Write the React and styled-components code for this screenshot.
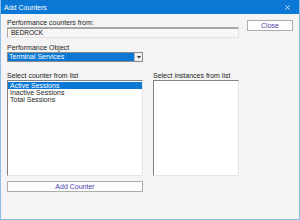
import React from "react";
import styled, { createGlobalStyle } from "styled-components";

const Global = createGlobalStyle`
  html, body { margin: 0; padding: 0; background: #f4f4f4; }
  body { font-family: "Liberation Sans", Arial, sans-serif; }
`;

const Window = styled.div`
  width: 300px;
  height: 220px;
  box-sizing: border-box;
  border: 1px solid #8cbde6;
  border-top: none;
  background: #f4f4f4;
  display: flex;
  flex-direction: column;
  overflow: hidden;
`;

const TitleBar = styled.div`
  height: 14px;
  margin: 0 -1px;
  background: #0a78d4;
  color: #fff;
  font-size: 7px;
  display: flex;
  align-items: center;
  justify-content: space-between;
  padding: 0 10px 0 4px;
`;

const CloseX = styled.svg`
  width: 5px;
  height: 5px;
`;

const Content = styled.div`
  padding: 4px 6px 0 6px;
  display: flex;
  flex-direction: column;
`;

const TopRow = styled.div`
  display: flex;
  align-items: flex-start;
`;

const Field = styled.div`
  display: flex;
  flex-direction: column;
  width: ${(p) => p.$w}px;
`;

const Label = styled.div`
  font-size: 7px;
  line-height: 9px;
  height: 9px;
  color: #1e1e1e;
  white-space: nowrap;
  margin-top: ${(p) => p.$mt || 0}px;
`;

const TextBox = styled.div`
  height: 11px;
  box-sizing: border-box;
  border-top: 2px solid #a8a8a8;
  border-left: 1px solid #a8a8a8;
  border-right: 1px solid #e2e2e2;
  border-bottom: 1px solid #e2e2e2;
  background: #f7f7f7;
  font-size: 6.5px;
  line-height: 8px;
  padding-left: 3px;
  color: #111;
`;

const Button = styled.button`
  box-sizing: border-box;
  width: ${(p) => p.$w}px;
  height: 11px;
  margin: ${(p) => p.$m || 0};
  padding: 0;
  background: #fdfdfd;
  border: 1px solid #adadad;
  font-family: "Liberation Sans", Arial, sans-serif;
  font-size: 7px;
  line-height: 9px;
  color: #4e45ad;
`;

const Select = styled.div`
  width: 136px;
  height: 10px;
  box-sizing: border-box;
  border: 1px solid #8a8a8a;
  display: flex;
  background: #fff;
`;

const SelectValue = styled.div`
  flex: 1;
  background: #0a78d4;
  color: #fff;
  font-size: 7px;
  line-height: 8px;
  padding-left: 1px;
`;

const DropButton = styled.div`
  width: 7px;
  border-left: 1px solid #b8b8b8;
  background: #f0f0f0;
  display: flex;
  align-items: center;
  justify-content: center;
`;

const Columns = styled.div`
  display: grid;
  grid-template-columns: 136px 86px;
  column-gap: 10px;
  margin-top: 9px;
`;

const ListBox = styled.div`
  height: 96px;
  box-sizing: border-box;
  border-top: 1px solid #828282;
  border-left: 1px solid #828282;
  border-right: 1px solid #e6e6e6;
  border-bottom: 1px solid #e6e6e6;
  background: #fff;
  padding-top: 1px;
`;

const Item = styled.div`
  font-size: 7px;
  line-height: 7px;
  height: 7px;
  padding-left: 2px;
  color: ${(p) => (p.$sel ? "#fff" : "#1e1e1e")};
  background: ${(p) => (p.$sel ? "#0a78d4" : "transparent")};
`;

export default function App() {
  return (
    <>
      <Global />
      <Window>
        <TitleBar>
          <span>Add Counters</span>
          <CloseX viewBox="0 0 10 10">
            <path d="M1 1L9 9M9 1L1 9" stroke="#fff" strokeWidth="1.6" />
          </CloseX>
        </TitleBar>
        <Content>
          <TopRow>
            <Field $w={232}>
              <Label>Performance counters from:</Label>
              <TextBox>BEDROCK</TextBox>
            </Field>
            <Button $w={46} $m="2px 0 0 8px">Close</Button>
          </TopRow>
          <Label $mt={5}>Performance Object</Label>
          <Select>
            <SelectValue>Terminal Services</SelectValue>
            <DropButton>
              <svg width="4" height="3" viewBox="0 0 4 3">
                <path d="M0 0H4L2 2.5Z" fill="#333" />
              </svg>
            </DropButton>
          </Select>
          <Columns>
            <Field>
              <Label>Select counter from list</Label>
              <ListBox>
                <Item $sel>Active Sessions</Item>
                <Item>Inactive Sessions</Item>
                <Item>Total Sessions</Item>
              </ListBox>
              <Button $w={136} $m="5px 0 0 0">Add Counter</Button>
            </Field>
            <Field>
              <Label>Select instances from list</Label>
              <ListBox />
            </Field>
          </Columns>
        </Content>
      </Window>
    </>
  );
}
